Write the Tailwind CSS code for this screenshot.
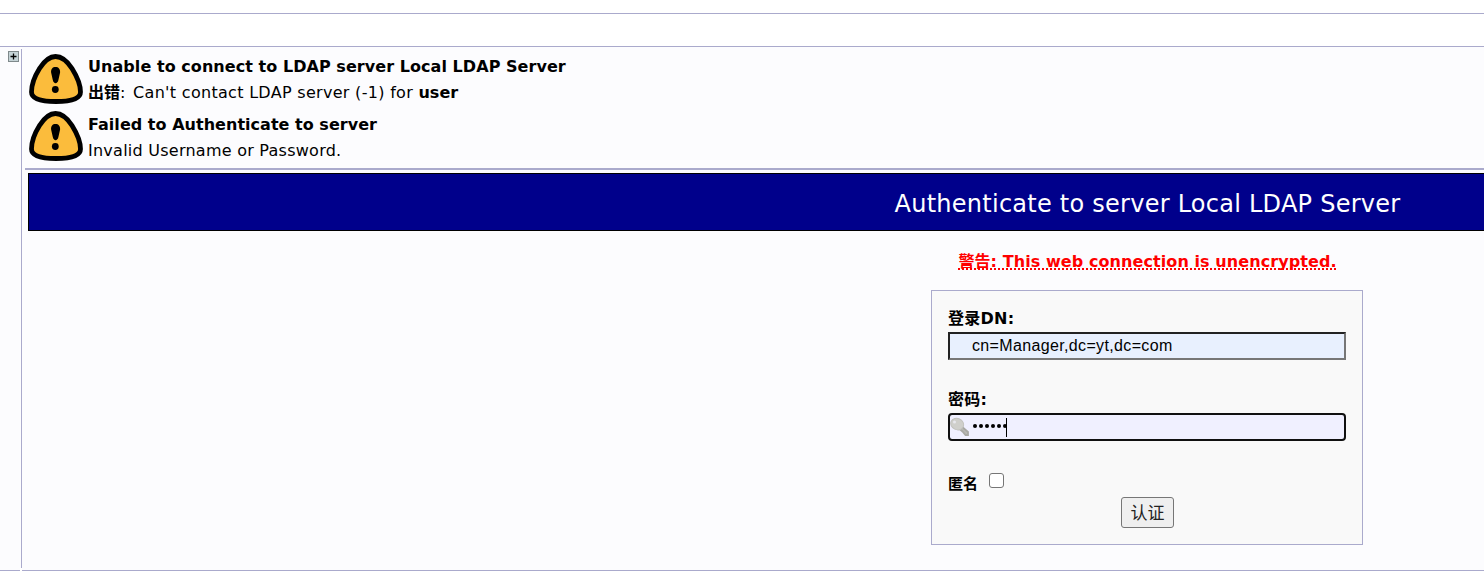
<!DOCTYPE html>
<html lang="zh-CN">
<head>
  <meta charset="UTF-8" />
  <meta name="viewport" content="width=device-width, initial-scale=1.0" />
  <title>phpLDAPadmin</title>
  <script src="https://cdn.jsdelivr.net/npm/@tailwindcss/browser@4"></script>
</head>
<body class="h-[579px] w-full overflow-hidden bg-white text-black text-[16px] font-['Verdana','DejaVu_Sans','Noto_Sans_CJK_SC',sans-serif]">
  <!-- Top bars -->
  <div class="h-[14px] border-b border-[#aaaacc]"></div>
  <div class="h-[33px] border-b border-[#aaaacc]"></div>

  <div class="h-[524px] overflow-hidden">
  <div class="flex h-[524px] w-[2270px]">
    <!-- Tree column -->
    <div class="flex w-[20px] shrink-0 flex-col border-b border-[#aaaacc] bg-[#fcfcfe] pt-1 pl-2">
      <svg class="block h-[11px] w-[11px]" viewBox="0 0 11 11">
        <rect x="0.5" y="0.5" width="10" height="10" fill="#c5d3d6" stroke="#7f898b" />
        <path d="M2.500 5.500h6M5.500 2.500v6" stroke="#000" stroke-width="1.300" />
      </svg>
    </div>
    <div class="mt-[2px] mb-[3px] w-[2px] shrink-0 border-r border-[#aaaacc] bg-[#fcfcfe]"></div>

    <!-- Body column -->
    <div class="grow border-b border-[#aaaacc] bg-[#fcfcfe] pt-[6px] pl-[3px]">
      <!-- System messages -->
      <div class="flex h-[57px]">
        <svg class="mt-px ml-[4px] block h-[50px] w-[54px] shrink-0" viewBox="0 0 54 50">
          <path d="M26.500 2.500C20.500 2.500 15 7.500 10.500 14.500C5.500 22.500 2.500 31 2.500 38C2.500 44.500 12 47.500 27 47.500C42 47.500 51.500 44.500 51.500 38C51.500 31 48 22.500 43 14.500C38.500 7.500 32.500 2.500 26.500 2.500Z" fill="#fbbc3c" stroke="#000" stroke-width="4.800" />
          <path d="M26.500 13C23.500 13 21.900 15 22.100 18.500L23.800 26C24.600 30.200 28.600 30.200 29.400 26L31.100 18.500C31.300 15 29.500 13 26.500 13Z" fill="#000" />
          <circle cx="26.300" cy="35.500" r="3.400" fill="#000" />
        </svg>
        <div class="pt-px pl-[5px] whitespace-nowrap">
          <div class="h-[26px] font-bold leading-[26px] tracking-[0.055px]">Unable to connect to LDAP server Local LDAP Server</div>
          <div class="h-[26px] leading-[26px] tracking-[0.300px]"><b class="tracking-normal">出错</b><span class="pr-[2px]">:</span> Can't contact LDAP server (-1) for <b class="tracking-[0.050px]">user</b></div>
        </div>
      </div>
      <div class="flex h-[58px]">
        <svg class="mt-px ml-[4px] block h-[50px] w-[54px] shrink-0" viewBox="0 0 54 50">
          <path d="M26.500 2.500C20.500 2.500 15 7.500 10.500 14.500C5.500 22.500 2.500 31 2.500 38C2.500 44.500 12 47.500 27 47.500C42 47.500 51.500 44.500 51.500 38C51.500 31 48 22.500 43 14.500C38.500 7.500 32.500 2.500 26.500 2.500Z" fill="#fbbc3c" stroke="#000" stroke-width="4.800" />
          <path d="M26.500 13C23.500 13 21.900 15 22.100 18.500L23.800 26C24.600 30.200 28.600 30.200 29.400 26L31.100 18.500C31.300 15 29.500 13 26.500 13Z" fill="#000" />
          <circle cx="26.300" cy="35.500" r="3.400" fill="#000" />
        </svg>
        <div class="pt-[2px] pl-[5px] whitespace-nowrap">
          <div class="h-[26px] font-bold leading-[26px] tracking-[0.030px]">Failed to Authenticate to server</div>
          <div class="h-[26px] leading-[26px] tracking-[0.250px]">Invalid Username or Password.</div>
        </div>
      </div>

      <div class="h-[2px] bg-[#aaaacc]"></div>

      <!-- Login page -->
      <div class="ml-[3px] w-[2239px] pt-[3px]">
        <h3 class="h-[58px] border border-black bg-[#00008b] text-center text-[24px] leading-[61px] tracking-[0.250px] text-white">Authenticate to server Local LDAP Server</h3>
        <div class="mt-[18px] h-[26px] text-center font-bold leading-[26px] tracking-[0.080px] text-[#ff0000]"><span class="underline decoration-dotted decoration-[1.500px] underline-offset-[1px] [text-decoration-skip-ink:none]">警告: This web connection is unencrypted.</span></div>

        <form class="mt-[15px] ml-[903px] flex h-[255px] w-[432px] flex-col border border-[#aaaacc] bg-[#f9f9f9] px-4 pt-[15px]">
          <label class="h-[26px] font-bold leading-[26px] tracking-[0.250px]">登录DN:</label>
          <div class="flex h-[28px] items-center border-2 border-t-[#222] border-r-[#767676] border-b-[#767676] border-l-[#222] bg-[#e8f0fe] pl-[22px] font-['Liberation_Sans',sans-serif] tracking-[0.350px]">cn=Manager,dc=yt,dc=com</div>
          <label class="mt-[27px] h-[26px] font-bold leading-[26px] tracking-[0.250px]">密码:</label>
          <div class="flex h-[28px] items-center rounded-[4px] border-2 border-[#101010] bg-[#f0f0ff]">
            <svg class="h-[20px] w-[20px]" viewBox="0 0 20 20">
              <path d="M8.500 11L11 9L18 15V18H15.500L12.500 14.500Z" fill="#b8b8b4" stroke="#a8a8a4" stroke-width="1.800" />
              <ellipse cx="7.200" cy="7" rx="6.600" ry="5.600" fill="#cfcfcb" stroke="#c2c2be" stroke-width="1" transform="rotate(25 7 7)" />
              <circle cx="4.500" cy="5" r="1.500" fill="#e8e8ee" />
            </svg>
            <span class="-mt-[2px] flex gap-[2px] pl-[3px]">
              <i class="size-1 rounded-full bg-black"></i><i class="size-1 rounded-full bg-black"></i><i class="size-1 rounded-full bg-black"></i><i class="size-1 rounded-full bg-black"></i><i class="size-1 rounded-full bg-black"></i><i class="size-1 rounded-full bg-black"></i>
            </span>
            <span class="-ml-px h-[19px] w-px bg-black"></span>
          </div>
          <div class="mt-[30px] flex h-[26px] items-start">
            <b class="text-[15px] leading-[26px]">匿名</b>
            <span class="mt-[2px] ml-[11px] size-[15px] rounded-[3px] border border-[#767676] bg-white"></span>
          </div>
          <button type="button" class="ml-[173px] flex h-[31px] w-[53px] items-center justify-center rounded-[3px] border border-[#767676] bg-[#efefef] pt-[2px] text-[17px] text-[#222]">认证</button>
        </form>
      </div>
    </div>
  </div>
  </div>
</body>
</html>
